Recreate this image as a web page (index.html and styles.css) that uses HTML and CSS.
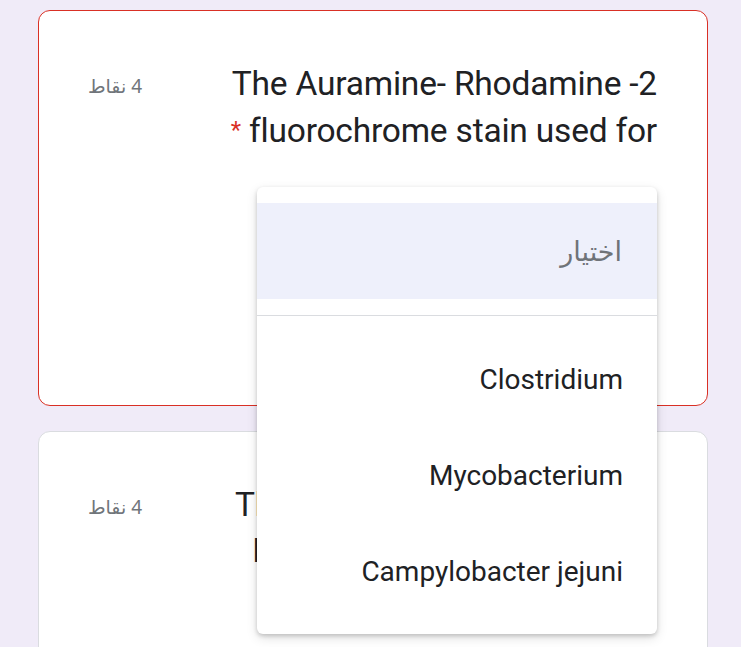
FILE: index.html
```html
<!DOCTYPE html>
<html lang="ar">
<head>
<meta charset="utf-8">
<link rel="stylesheet" href="styles.css">
</head>
<body>
<div class="page">
  <section class="card card-error">
    <div class="row">
      <div class="points"><span dir="rtl">4 نقاط</span></div>
      <div class="title">
        <div class="line">The Auramine- Rhodamine -2</div>
        <div class="line"><span class="req">*</span> fluorochrome stain used for</div>
      </div>
    </div>
  </section>
  <section class="card card-next">
    <div class="row">
      <div class="points"><span dir="rtl">4 نقاط</span></div>
      <div class="title title-under">
        <div class="line">The</div>
        <div class="line indent">Is</div>
      </div>
    </div>
  </section>
  <div class="menu">
    <div class="opt opt-placeholder" dir="rtl">اختيار</div>
    <div class="divider"></div>
    <div class="options">
      <div class="opt">Clostridium</div>
      <div class="opt">Mycobacterium</div>
      <div class="opt">Campylobacter jejuni</div>
    </div>
  </div>
</div>
</body>
</html>
```
FILE: styles.css
```css
html, body {
  margin: 0;
  padding: 0;
  background: #f0ebf8;
  height: 100%;
  overflow: hidden;
}
body {
  font-family: Roboto, "Noto Sans", "DejaVu Sans", sans-serif;
  color: #202124;
}
.page {
  position: relative;
  padding: 10px 33px 0 38px;
  display: flex;
  flex-direction: column;
  gap: 25px;
}
.card {
  background: #fff;
  border-radius: 12px;
  box-sizing: border-box;
}
.card-error {
  border: 1.5px solid #d93025;
  height: 396px;
}
.card-next {
  border: 1px solid #dadce0;
  height: 260px;
}
.row {
  display: flex;
  align-items: flex-start;
  padding: 50px 50px 0 49px;
}
.points {
  flex: 0 0 auto;
  width: 56px;
  white-space: nowrap;
  font-size: 19px;
  color: #70757a;
  padding-top: 13px;
  font-family: "Noto Sans", "DejaVu Sans", sans-serif;
  line-height: 24px;
}
.title {
  flex: 1;
  text-align: right;
  font-size: 33.5px;
  line-height: 46px;
  color: #202124;
  letter-spacing: -0.2px;
}
.title-under {
  flex: 0 0 auto;
  margin-left: 91px;
  text-align: left;
  white-space: nowrap;
}
.indent {
  padding-left: 17px;
}
.req {
  color: #d93025;
  font-size: 24px;
  vertical-align: 4px;
}
.menu {
  position: absolute;
  left: 257px;
  top: 187px;
  width: 400px;
  height: 447px;
  background: #fff;
  border-radius: 6px;
  box-shadow: 0 2px 4px rgba(0,0,0,0.18), 0 4px 12px rgba(0,0,0,0.12);
  padding-top: 16px;
  box-sizing: border-box;
}
.options {
  padding-top: 15px;
}
.opt {
  height: 96px;
  display: flex;
  align-items: center;
  justify-content: flex-end;
  padding-right: 34px;
  font-size: 28px;
  color: #202124;
}
.opt-placeholder {
  background: #eef0fb;
  justify-content: flex-start;
  padding-right: 35px;
  color: #6f7378;
  font-size: 27px;
  font-family: "DejaVu Sans", "Noto Sans", sans-serif;
}
.divider {
  height: 1px;
  background: #dadce0;
  margin-top: 16px;
}
```
